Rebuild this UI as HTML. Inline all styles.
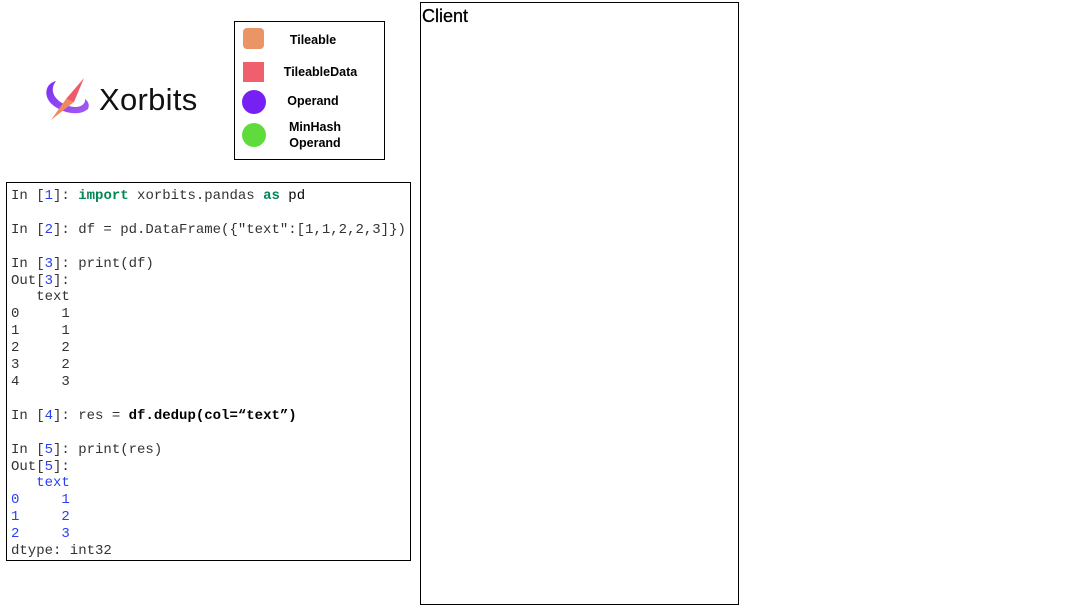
<!DOCTYPE html>
<html><head><meta charset="utf-8"><style>
body{margin:0;width:1080px;height:608px;background:#fff;position:relative;overflow:hidden;font-family:"Liberation Sans",sans-serif}
.abs{position:absolute}
.leg{left:234px;top:21px;width:149px;height:137px;border:1.5px solid #000}
.lt{position:absolute;font-weight:bold;font-size:12.5px;color:#000;text-align:center;line-height:16px}
.code{left:6px;top:182px;width:403px;height:377px;border:1.5px solid #000}
pre{margin:0;position:absolute;left:4px;top:5px;font-family:"Liberation Mono",monospace;font-size:14px;line-height:16.9px;color:#333}
.b{color:#2a3ff5}.k{color:#008855;font-weight:bold}.bk{color:#000}.bb{color:#000;font-weight:bold}
.client{left:420px;top:2px;width:317px;height:601px;border:1.5px solid #000}
</style></head><body>
<svg class="abs" style="left:40px;top:72px" width="60" height="52" viewBox="0 0 60 52">
<defs><linearGradient id="g" x1="0" y1="0" x2="1" y2="1"><stop offset="0" stop-color="#7b2ff0"/><stop offset="1" stop-color="#a35cf0"/></linearGradient></defs>
<path d="M16 9 C4 12 3 26 14 34 C25 42 40 44 48 37 C50 33 48 29 45 27 C46 33 38 38 26 33 C14 28 9 18 16 9Z" fill="url(#g)"/>
<path d="M44 6 L34 30 L26 27 Z" fill="#ef5a6a"/>
<path d="M26 27 L34 30 L11 48 Z" fill="#f08a5a"/>
</svg>
<div class="abs" style="left:99px;top:82px;font-size:31px;color:#111;letter-spacing:0.3px">Xorbits</div>
<div class="abs leg">
<div class="abs" style="left:8px;top:6px;width:21px;height:21px;background:#e99565;border-radius:4px"></div>
<div class="lt" style="left:38px;top:10px;width:80px">Tileable</div>
<div class="abs" style="left:8px;top:40px;width:21px;height:20px;background:#ef5f6d"></div>
<div class="lt" style="left:38px;top:42px;width:95px">TileableData</div>
<div class="abs" style="left:7px;top:68px;width:24px;height:24px;background:#7620f4;border-radius:50%"></div>
<div class="lt" style="left:38px;top:71px;width:80px">Operand</div>
<div class="abs" style="left:7px;top:101px;width:24px;height:24px;background:#5fdb3c;border-radius:50%"></div>
<div class="lt" style="left:38px;top:97px;width:84px">MinHash<br>Operand</div>
</div>
<div class="abs code"><pre>In [<span class="b">1</span>]: <span class="k">import</span> xorbits.pandas <span class="k">as</span> <span class="bk">pd</span>

In [<span class="b">2</span>]: df = pd.DataFrame({"text":[1,1,2,2,3]})

In [<span class="b">3</span>]: print(df)
Out[<span class="b">3</span>]:
   text
0     1
1     1
2     2
3     2
4     3

In [<span class="b">4</span>]: res = <span class="bb">df.dedup(col=“text”)</span>

In [<span class="b">5</span>]: print(res)
Out[<span class="b">5</span>]:
<span class="b">   text
0     1
1     2
2     3</span>
dtype: int32</pre></div>
<div class="abs client"><div style="position:absolute;left:1px;top:3px;font-size:18px;color:#000;-webkit-text-stroke:0.3px #000">Client</div></div>
</body></html>
